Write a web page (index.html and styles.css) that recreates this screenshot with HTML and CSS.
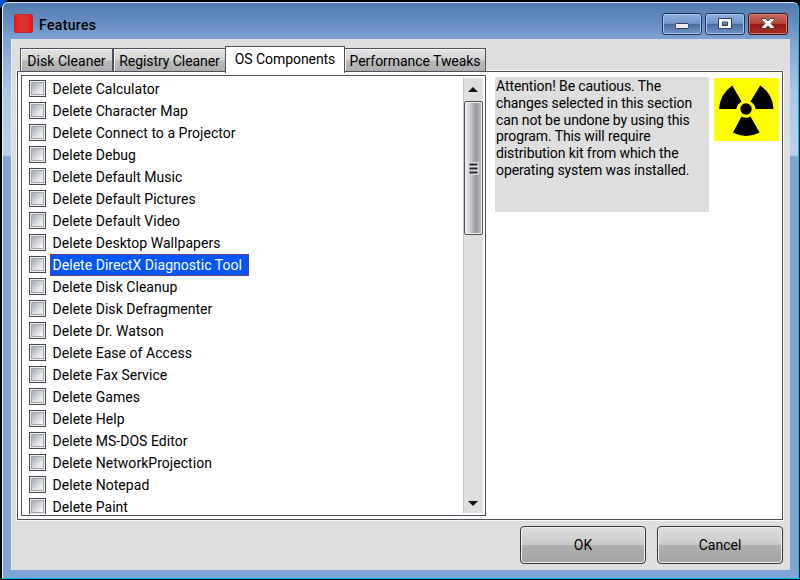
FILE: index.html
```html
<!DOCTYPE html>
<html lang="en">
<head>
<meta charset="utf-8">
<title>Features</title>
<link rel="stylesheet" href="styles.css">
</head>
<body>
<div class="window">
  <header class="titlebar">
    <span class="app-icon"></span>
    <h1 class="title">Features</h1>
    <div class="controls">
      <button class="control" aria-label="Minimize"><svg width="40" height="22" viewBox="0 0 40 22"><rect x="13.500" y="10.500" width="13" height="5" rx="1" fill="#eee" stroke="#34405a"/></svg></button>
      <button class="control" aria-label="Maximize"><svg width="40" height="22" viewBox="0 0 40 22"><path d="M13.500 5.500h13v10h-13zM17.500 9v3.500h5V9z" fill="#f4f4f4" fill-rule="evenodd" stroke="#34405a" stroke-linejoin="round"/></svg></button>
      <button class="control close" aria-label="Close"><svg width="40" height="22" viewBox="0 0 40 22"><path d="M13.500 5.500h4l2.500 2.500 2.500-2.500h4v1.500l-3.500 3.500 3.500 3.500v1.500h-4L20 13l-2.500 2.500h-4V14l3.500-3.500L13.500 7z" fill="#f4f4f4" stroke="#4b3a44" stroke-linejoin="round"/></svg></button>
    </div>
  </header>
  <main class="client">
    <nav class="tabs">
      <span class="tab disk"><b>Disk Cleaner</b></span>
      <span class="tab registry"><b>Registry Cleaner</b></span>
      <span class="tab active"><b>OS Components</b></span>
      <span class="tab performance"><b>Performance Tweaks</b></span>
    </nav>
    <section class="panel">
      <div class="listbox">
        <ul class="items">
          <li><i></i><span>Delete Calculator</span></li>
          <li><i></i><span>Delete Character Map</span></li>
          <li><i></i><span>Delete Connect to a Projector</span></li>
          <li><i></i><span>Delete Debug</span></li>
          <li><i></i><span>Delete Default Music</span></li>
          <li><i></i><span>Delete Default Pictures</span></li>
          <li><i></i><span>Delete Default Video</span></li>
          <li><i></i><span>Delete Desktop Wallpapers</span></li>
          <li class="selected"><i></i><span>Delete DirectX Diagnostic Tool</span></li>
          <li><i></i><span>Delete Disk Cleanup</span></li>
          <li><i></i><span>Delete Disk Defragmenter</span></li>
          <li><i></i><span>Delete Dr. Watson</span></li>
          <li><i></i><span>Delete Ease of Access</span></li>
          <li><i></i><span>Delete Fax Service</span></li>
          <li><i></i><span>Delete Games</span></li>
          <li><i></i><span>Delete Help</span></li>
          <li><i></i><span>Delete MS-DOS Editor</span></li>
          <li><i></i><span>Delete NetworkProjection</span></li>
          <li><i></i><span>Delete Notepad</span></li>
          <li><i></i><span>Delete Paint</span></li>
        </ul>
        <div class="scrollbar">
          <svg class="arrow" width="20" height="23" viewBox="0 0 20 23"><path d="M5 14L10 9L15 14z" fill="#111"/></svg>
          <div class="thumb"><svg width="11" height="13" viewBox="0 0 11 13"><rect width="11" height="13" rx="2" fill="#dcdce0"/><path d="M1.500 2.500h8M1.500 6.500h8M1.500 10.500h8" stroke="#25272e" stroke-width="2"/></svg></div>
          <svg class="arrow down" width="20" height="20" viewBox="0 0 20 20"><path d="M5 8L10 13L15 8z" fill="#111"/></svg>
        </div>
      </div>
      <p class="notice">Attention! Be cautious. The<br>changes selected in this section<br>can not be undone by using this<br>program. This will require<br>distribution kit from which the<br>operating system was installed.</p>
      <svg class="hazard" width="65" height="63" viewBox="0 0 65 63">
        <rect width="65" height="63" fill="#ff0"/>
        <path d="M5 31Q6 16 18.300 7.500L27.500 23.500Q23 26 22.500 31zM59.500 31Q59 16 46.200 7.500L36.500 23.500Q41 26 41.500 31zM27.500 38.500Q32 41 36.500 38.500L45.500 54.500Q32 61.500 19 54.500z"/>
        <circle cx="32" cy="31" r="5.700"/>
      </svg>
    </section>
    <footer class="actions">
      <button class="action">OK</button>
      <button class="action">Cancel</button>
    </footer>
  </main>
</div>
</body>
</html>
```
FILE: styles.css
```css
* { box-sizing: border-box; }
body {
  margin: 0;
  width: 800px;
  height: 580px;
  overflow: hidden;
  padding: 2px 1px 1px 2px;
  background: linear-gradient(135deg, #0050c0 0 5px, #000 6px calc(100% - 6px), #001f60);
  font: 14px/16px Roboto, "Liberation Sans", sans-serif;
  color: #000;
}
.window {
  height: 577px;
  padding: 0 8px 8px 8px;
  border: 1px solid #00b9ee;
  border-top-color: #d5e9fa;
  border-left-color: #e4f1fc;
  border-radius: 6px 6px 0 0;
  background: linear-gradient(#527bad 0, #6189bd 15px, #7da2d2 36px, #aac8e9 90px, #b7d1ed 152px, #80a5d5 154px);
}
.titlebar { display: flex; height: 36px; align-items: flex-start; padding: 10px 0 0 3px; }
.app-icon {
  width: 19px;
  height: 19px;
  margin-top: 1px;
  border-radius: 2px;
  border: 1px solid #b92835;
  background: linear-gradient(90deg, #ff1212, #df3535 35%, #db3434 65%, #ff0c0c);
}
.title { margin: 3px 0 0 6px; font-size: 14px; line-height: 18px; font-weight: 500; letter-spacing: .35px; }
.controls { display: flex; gap: 3px; margin: 0 2px 0 auto; }
.control {
  display: flex;
  width: 40px;
  height: 22px;
  padding: 0;
  border: 1px solid #1b3458;
  border-radius: 3px;
  background: linear-gradient(#8fb0db, #7398c9 47%, #47699f 50%, #7096ca);
  box-shadow: inset 0 0 0 1px #a9c7e8;
}
.control svg { flex: none; margin: -1px; }
.close { background: linear-gradient(#c46e64, #b44338 47%, #941710 50%, #a92d22); border-color: #42151d; box-shadow: inset 0 0 0 1px #d37c70; }
.client { height: 531px; padding: 7px 7px 6px 6px; background: #dedede; border-left: 1px solid #ececec; }
.tabs { display: flex; height: 25px; align-items: flex-end; padding-left: 2px; }
.tab {
  display: flex;
  justify-content: center;
  align-items: center;
  height: 23px;
  padding-top: 2px;
  border: 1px solid #4b4f5b;
  border-bottom: 0;
  box-shadow: inset 1px 1px #f5f5f5;
  background: linear-gradient(#e3e3e3, #d3d3d3 50%, #bababa 54%, #adadad);
  white-space: nowrap;
}
.tab b { font-weight: 400; }
.disk { width: 93px; letter-spacing: .04px; }
.registry { width: 113px; letter-spacing: -.06px; }
.active { position: relative; z-index: 1; width: 120px; height: 27px; margin: 0 -1px -2px; padding: 0 0 3px; background: #fff; box-shadow: none; letter-spacing: -.06px; }
.performance { width: 142px; letter-spacing: -.06px; }
.panel {
  display: flex;
  align-items: flex-start;
  width: 766px;
  height: 449px;
  margin-left: -1px;
  padding: 3px;
  border: 1px solid #4b4f5b;
  box-shadow: 0 0 0 1px #f7f7f7;
  background: #fff;
}
.listbox { display: flex; width: 465px; height: 441px; border: 1px solid #4b4f5b; padding: 2px 2px 2px 7px; overflow: hidden; }
.items { flex: 1; height: 436px; margin: 0; padding: 0; list-style: none; overflow: hidden; }
.items li { display: flex; align-items: flex-start; height: 22px; }
.items i {
  width: 17px;
  height: 17px;
  margin: 2px 4px 0 0;
  border: 1px solid #45484f;
  background: linear-gradient(135deg, #a2a8b4, #dcdee2 60%, #fafafa) 2px 2px / 11px 11px no-repeat, #e4e4e6;
  box-shadow: inset 0 0 0 1px #eee, inset 0 0 0 2px #a5a7ad;
}
.items span { height: 22px; padding: 2px 4px 2px 1.500px; border: 1px solid transparent; white-space: nowrap; letter-spacing: .04px; }
.items .selected span { width: 199px; border: 1px dashed #ad3028; background: #0057ff; color: #fff; }
.scrollbar { display: flex; flex-direction: column; width: 20px; height: 435px; background: #dedede; border-left: 1px solid #c5c5c5; }
.arrow { display: block; margin-left: -1px; }
.thumb {
  display: flex;
  align-items: center;
  justify-content: center;
  width: 19px;
  height: 134px;
  border: 1px solid #50535a;
  border-radius: 2px;
  box-shadow: inset 0 0 0 1px #eee;
  background: linear-gradient(90deg, #eee, #d5d5da 25%, #9899a1 65%, #c1c1c6);
}
.down { margin-top: auto; }
.notice { width: 214px; height: 135px; margin: 2px 5px 0 9px; padding-top: 1px; background: #dedede; line-height: 16.800px; white-space: nowrap; letter-spacing: -.1px; text-indent: 0; }
.notice { padding-left: 1px; }
.hazard { display: block; margin-top: 3px; }
.actions { display: flex; justify-content: flex-end; gap: 11px; margin-top: 6px; }
.action {
  width: 126px;
  height: 38px;
  padding: 0;
  border: 1px solid #34363a;
  border-radius: 4px;
  background: linear-gradient(#dfdfdf, #c9c9c9 49%, #afafaf 51%, #a4a4a4);
  box-shadow: inset 0 0 0 1px #eee;
  font: inherit;
}
```
